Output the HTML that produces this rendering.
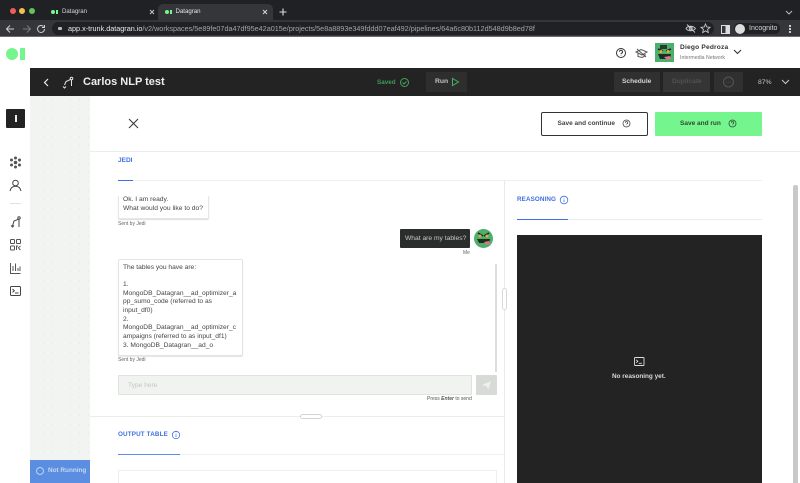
<!DOCTYPE html>
<html><head><meta charset="utf-8"><title>Datagran</title>
<style>
html,body{margin:0;padding:0;width:800px;height:483px;overflow:hidden;background:#fff;font-family:"Liberation Sans",sans-serif}
.a{position:absolute}
.t{position:absolute;white-space:nowrap}
svg{position:absolute;overflow:visible}
</style></head><body>
<!-- Browser chrome -->
<div class="a" style="left:0;top:0;width:800px;height:20px;background:#202124"></div>
<div class="a" style="left:0;top:20px;width:800px;height:17px;background:#35363a"></div>
<div class="a" style="left:0;top:36px;width:800px;height:1px;background:#6a6b6e"></div>
<div class="a" style="left:10px;top:7.500px;width:6px;height:6px;border-radius:50%;background:#ec5f57"></div>
<div class="a" style="left:19px;top:7.500px;width:6px;height:6px;border-radius:50%;background:#f5bd4f"></div>
<div class="a" style="left:29px;top:7.500px;width:6px;height:6px;border-radius:50%;background:#61c454"></div>
<div class="a" style="left:158px;top:4px;width:115px;height:16px;background:#35363a;border-radius:5px 5px 0 0"></div>
<div class="a" style="left:51px;top:10px;width:4px;height:4px;border-radius:50%;background:#7df58f"></div><div class="a" style="left:56px;top:10px;width:2px;height:4px;background:#7df58f"></div>
<div class="t" style="left:62px;top:7px;font-size:6.100px;color:#d5d6d8;line-height:10px">Datagran</div>
<svg style="left:149px;top:9px" width="6" height="6"><path d="M1 1l4 4M5 1L1 5" stroke="#ccc" stroke-width=".9"/></svg>
<div class="a" style="left:165px;top:10px;width:4px;height:4px;border-radius:50%;background:#7df58f"></div><div class="a" style="left:170px;top:10px;width:2px;height:4px;background:#7df58f"></div>
<div class="t" style="left:175.500px;top:7px;font-size:6.100px;color:#e4e5e7;line-height:10px">Datagran</div>
<svg style="left:262px;top:9px" width="6" height="6"><path d="M1 1l4 4M5 1L1 5" stroke="#ddd" stroke-width=".9"/></svg>
<svg style="left:279px;top:8px" width="8" height="8"><path d="M4 .5v7M.5 4h7" stroke="#ddd" stroke-width="1.100"/></svg>
<svg style="left:785px;top:10px" width="8" height="5"><path d="M1 1l3 3 3-3" fill="none" stroke="#bbb" stroke-width="1"/></svg>
<svg style="left:0;top:20px" width="50" height="17" fill="none" stroke="#d0d1d3" stroke-width="1"><path d="M14 9H7M10 5.500L6.500 9l3.500 3.500"/><path d="M30 9h-7M27 5.500L30.500 9 27 12.500" stroke="#77787b"/><path d="M44.500 9a3.500 3.500 0 1 1-1-2.500M44.500 5v2.500H42"/></svg>
<div class="a" style="left:52px;top:22px;width:262px;height:13px;background:#202124;border-radius:7px 0 0 7px"></div>
<div class="a" style="left:300px;top:22px;width:414px;height:13px;background:#202124;border-radius:0 7px 7px 0"></div>
<div class="a" style="left:58px;top:27px;width:4px;height:3px;background:#bbb;border-radius:1px"></div>
<div class="t" style="left:68px;top:24px;font-size:7.240px;line-height:10px;color:#a4a5a8"><span style="color:#e8e9eb">app.x-trunk.datagran.io</span>/v2/workspaces/5e89fe07da47df95e42a015e/projects/5e8a8893e349fddd07eaf492/pipelines/64a6c80b112d548d9b8ed78f</div>
<svg style="left:685px;top:23px" width="12" height="11" fill="none" stroke="#c8c9cb" stroke-width=".9"><path d="M1 5.500C3 2.500 8 2.500 10.500 5.500 8 8.500 3 8.500 1 5.500zM2 1.500l8 8"/><circle cx="5.700" cy="5.500" r="1.500"/></svg>
<svg style="left:700px;top:23px" width="11" height="11" fill="none" stroke="#c8c9cb" stroke-width=".9"><path d="M5.500 1l1.300 3 3.200.3-2.400 2.100.7 3.200-2.800-1.700-2.800 1.700.7-3.200L1 4.300 4.200 4z"/></svg>
<div class="a" style="left:721px;top:25px;width:7px;height:7px;border:1px solid #ddd;box-sizing:content-box;background:linear-gradient(90deg,#35363a 50%,#ddd 50%)"></div>
<div class="a" style="left:734px;top:23px;width:46px;height:11px;background:#202124;border-radius:6px"></div>
<div class="a" style="left:735px;top:24px;width:10px;height:10px;background:#ddd;border-radius:50%"></div>
<div class="t" style="left:749px;top:24px;font-size:7px;line-height:10px;color:#d6d7d9">Incognito</div>
<div class="a" style="left:789px;top:25px;width:1.500px;height:1.500px;background:#ccc;box-shadow:0 3px 0 #ccc,0 6px 0 #ccc"></div>

<!-- Top app bar -->
<div class="a" style="left:6px;top:48px;width:12px;height:12px;border-radius:50%;background:#74f58e"></div>
<div class="a" style="left:20px;top:48px;width:5px;height:12px;background:#74f58e"></div>
<svg style="left:615px;top:46px" width="12" height="14" fill="none" stroke="#333" stroke-width="1"><circle cx="6" cy="7" r="4.500"/><path d="M4.500 5.800a1.500 1.500 0 1 1 2 1.400c-.4.200-.5.500-.5 1M6 9.500v.4"/></svg>
<svg style="left:635px;top:47px" width="13" height="12" fill="none" stroke="#555" stroke-width="1"><path d="M1 5l5-2.500 6 2.500-5 3zM3 6.500v3l4 1 3-1.500V7M2 2l9 8"/></svg>
<svg style="left:655px;top:43px" width="19" height="19"><rect width="19" height="19" fill="#4caf6b"/><rect x="5" y="2" width="7" height="4" fill="#2a3a2c"/><path d="M3 6l5 2M16 6l-5 2" stroke="#222" stroke-width="1.500"/><circle cx="6" cy="8.500" r="1.500" fill="#e0b030"/><circle cx="13" cy="8.500" r="1.500" fill="#e0b030"/><path d="M3 11h13l-1 5H5z" fill="#1f2a20"/><path d="M9 14l6-1 1 3-4 1z" fill="#e0738c"/></svg>
<div class="t" style="left:680px;top:43px;font-size:6.600px;font-weight:bold;color:#333;line-height:10px;letter-spacing:.2px">Diego Pedroza</div>
<div class="t" style="left:680px;top:53.500px;font-size:5.200px;color:#777;line-height:8px">Intermedia Network</div>
<svg style="left:733px;top:49px" width="9" height="6"><path d="M1 1l3.500 3.500L8 1" fill="none" stroke="#333" stroke-width="1.100"/></svg>

<!-- Dark header -->
<div class="a" style="left:30px;top:68px;width:770px;height:28px;background:#222322"></div>
<svg style="left:42px;top:77px" width="8" height="11"><path d="M6 2L2.500 5.500 6 9" fill="none" stroke="#eee" stroke-width="1.200"/></svg>
<svg style="left:62px;top:76px" width="12" height="13" fill="none" stroke="#e4e4e4" stroke-width="1"><circle cx="9.500" cy="2.500" r="1.300"/><path d="M8.500 3.500L4 5.500 2.500 9M9.500 4v6"/><path d="M1 10.500l1.500 1.500 1.500-1.500"/></svg>
<div class="t" style="left:83px;top:74.500px;font-size:11px;font-weight:bold;color:#eee;line-height:15px">Carlos NLP test</div>
<div class="t" style="left:377px;top:78px;font-size:6.300px;font-weight:bold;color:#3f9a56;line-height:10px">Saved</div>
<svg style="left:399px;top:77px" width="11" height="11" fill="none" stroke="#45a35d" stroke-width="1"><circle cx="5.500" cy="5.500" r="4"/><path d="M3.500 5.500l1.500 1.500 2.500-2.500"/></svg>
<div class="a" style="left:426px;top:72px;width:41px;height:20px;background:#2d2e2d;border-radius:1px"></div>
<div class="t" style="left:435px;top:77px;font-size:6.800px;font-weight:bold;color:#c4c4c4;line-height:10px">Run</div>
<svg style="left:451px;top:77px" width="8" height="10"><path d="M1.500 1.500v7l6-3.500z" fill="none" stroke="#4caf66" stroke-width="1"/></svg>
<div class="a" style="left:614px;top:72px;width:46px;height:20px;background:#2f302f;border-radius:1px"></div>
<div class="t" style="left:622px;top:77px;font-size:6.600px;font-weight:bold;color:#d4d4d4;line-height:10px">Schedule</div>
<div class="a" style="left:663px;top:72px;width:47px;height:20px;background:#343534;border-radius:1px"></div>
<div class="t" style="left:672px;top:77px;font-size:6.600px;font-weight:bold;color:#505150;line-height:10px">Duplicate</div>
<div class="a" style="left:714px;top:72px;width:29px;height:20px;background:#2f302f;border-radius:1px"></div>
<svg style="left:722px;top:76px" width="13" height="12" fill="none" stroke="#555" stroke-width="1"><circle cx="6.500" cy="6" r="5"/><path d="M4 6h.6M6.200 6h.6M8.400 6H9"/></svg>
<div class="t" style="left:758px;top:77.500px;font-size:6.800px;color:#c4c4c4;line-height:10px">87%</div>
<svg style="left:781px;top:79px" width="9" height="6"><path d="M1 1l3.500 3.500L8 1" fill="none" stroke="#ccc" stroke-width="1"/></svg>

<!-- Left sidebar -->
<div class="a" style="left:6px;top:109px;width:19px;height:19px;background:#222322;border-radius:1px"></div>
<div class="a" style="left:14.500px;top:115px;width:2px;height:7px;background:#eee"></div>
<svg style="left:9px;top:156px" width="13" height="13" fill="#555"><circle cx="6.500" cy="6.500" r="1.800"/><circle cx="6.500" cy="2" r="1.500"/><circle cx="6.500" cy="11" r="1.500"/><circle cx="2.500" cy="4" r="1.500"/><circle cx="10.500" cy="4" r="1.500"/><circle cx="2.500" cy="9" r="1.500"/><circle cx="10.500" cy="9" r="1.500"/></svg>
<svg style="left:9px;top:179px" width="13" height="13" fill="none" stroke="#444" stroke-width="1"><circle cx="6.500" cy="4" r="2.800"/><path d="M1 12c.6-3 2.500-4.800 5.500-4.800S11.400 9 12 12"/></svg>
<div class="a" style="left:10px;top:203px;width:11px;height:1px;background:#dfe2df"></div>
<svg style="left:10px;top:216px" width="12" height="13" fill="none" stroke="#444" stroke-width="1"><circle cx="9" cy="2" r="1.200"/><path d="M8.500 3.200L4 5 2.500 10M9 3.500v7.500M1 9.500l1.500 1.500L4 9.500"/></svg>
<svg style="left:10px;top:239px" width="11" height="12" fill="none" stroke="#555" stroke-width="1"><rect x=".5" y=".5" width="4" height="4" rx=".6"/><rect x="6.500" y=".5" width="4" height="4" rx=".6"/><rect x=".5" y="7" width="4" height="4" rx=".6"/><path d="M6.500 11V7h1.500M8 9l2.500-2M8.500 9l2 2"/></svg>
<svg style="left:10px;top:262px" width="11" height="12" fill="none" stroke="#555" stroke-width="1"><path d="M.5 1v10.500h10M3 9V4M5.500 9V1.500M8 9V6M10 9V4.500"/></svg>
<svg style="left:10px;top:286px" width="11" height="11" fill="none" stroke="#444" stroke-width="1"><rect x=".5" y=".5" width="10" height="9" rx="1"/><path d="M2.500 3l1.800 1.700-1.800 1.700M5 7h3.500"/></svg>

<!-- Dotted bg -->
<div class="a" style="left:30px;top:96px;width:60px;height:364px;background-color:#f2f4f1;background-image:radial-gradient(#e4e6e3 .6px,transparent .8px);background-size:9px 9px"></div>
<div class="a" style="left:30px;top:460px;width:60px;height:23px;background:#5b8ee0"></div>
<div class="a" style="left:36px;top:467px;width:6px;height:6px;border:1px solid #bcd0f2;border-radius:50%"></div>
<div class="t" style="left:48px;top:466px;font-size:6.400px;color:#c6d8f6;line-height:10px;font-weight:bold">Not Running</div>

<!-- Panel -->
<svg style="left:128px;top:118px" width="11" height="11"><path d="M1 1l9 9M10 1l-9 9" fill="none" stroke="#333" stroke-width="1"/></svg>
<div class="a" style="left:541px;top:112px;width:107px;height:24px;box-sizing:border-box;border:1px solid #333;border-radius:2px;background:#fff"></div>
<div class="t" style="left:557.500px;top:118.500px;font-size:6.500px;font-weight:bold;color:#444;line-height:10px">Save and continue</div>
<svg style="left:622px;top:119px" width="9" height="9" fill="none" stroke="#444" stroke-width=".8"><circle cx="4.500" cy="4.500" r="3.500"/><path d="M3.300 3.700a1.200 1.200 0 1 1 1.500 1.200v.6M4.800 6.500v.3"/></svg>
<div class="a" style="left:655px;top:112px;width:107px;height:24px;background:#74f58e;border-radius:1px"></div>
<div class="t" style="left:680px;top:118.500px;font-size:6.500px;font-weight:bold;color:#2c4a33;line-height:10px">Save and run</div>
<svg style="left:728px;top:119px" width="9" height="9" fill="none" stroke="#2c4a33" stroke-width=".8"><circle cx="4.500" cy="4.500" r="3.500"/><path d="M3.300 3.700a1.200 1.200 0 1 1 1.500 1.200v.6M4.800 6.500v.3"/></svg>
<div class="a" style="left:90px;top:151px;width:710px;height:1px;background:#eceeec"></div>
<div class="t" style="left:118px;top:156px;font-size:6.500px;font-weight:bold;color:#3f6fe0;line-height:10px">JEDI</div>
<div class="a" style="left:118px;top:180px;width:644px;height:1px;background:#eef0ee"></div>
<div class="a" style="left:118px;top:179.500px;width:15px;height:1.200px;background:#3f6fe0"></div>

<!-- Chat -->
<div class="a" style="left:118px;top:196px;width:89px;height:22px;background:#fff;border:1px solid #e6e6e6;border-top:none;box-shadow:0 1px 1px #ddd;border-radius:0 0 2px 2px"></div>
<div class="t" style="left:123px;top:196px;font-size:6.700px;line-height:8.700px;color:#444">Ok. I am ready.<br>What would you like to do?</div>
<div class="t" style="left:118px;top:219.500px;font-size:5px;line-height:8px;color:#666">Sent by Jedi</div>
<div class="a" style="left:400px;top:229px;width:70px;height:19px;background:#2b2c2c;border-radius:1px"></div>
<div class="t" style="left:405px;top:234px;font-size:6.700px;line-height:9px;color:#c8c8c8">What are my tables?</div>
<svg style="left:474px;top:229px" width="19" height="19"><circle cx="9.500" cy="9.500" r="9.500" fill="#4caf6b"/><path d="M4 4l5 3M15 4l-5 3" stroke="#222" stroke-width="1.500"/><circle cx="6" cy="7" r="1.500" fill="#e0b030"/><circle cx="13" cy="7" r="1.500" fill="#e0b030"/><path d="M3 10h13l-1 4H5z" fill="#1f2a20"/><path d="M10 13l5-1 1 3-4 1z" fill="#e0738c"/></svg>
<div class="t" style="left:463px;top:249px;font-size:5px;line-height:8px;color:#666">Me</div>
<div class="a" style="left:118px;top:259px;width:123px;height:95px;background:#fff;border:1px solid #e4e4e4;border-radius:2px;box-shadow:0 1px 1px #e4e4e4"></div>
<div class="t" style="left:123px;top:263.500px;font-size:6.650px;line-height:8.680px;color:#444">The tables you have are:<br><br>1.<br>MongoDB_Datagran__ad_optimizer_a<br>pp_sumo_code (referred to as<br>input_df0)<br>2.<br>MongoDB_Datagran__ad_optimizer_c<br>ampaigns (referred to as input_df1)<br>3. MongoDB_Datagran__ad_o</div>
<div class="t" style="left:118px;top:355.500px;font-size:5px;line-height:8px;color:#666">Sent by Jedi</div>
<div class="a" style="left:495px;top:264px;width:2px;height:108px;background:#dcdcdc"></div>

<!-- Input -->
<div class="a" style="left:118px;top:375px;width:354px;height:20px;box-sizing:border-box;background:#f1f3f0;border:1px solid #e0e2df;border-radius:1px"></div>
<div class="t" style="left:128px;top:381px;font-size:6.600px;line-height:9px;color:#c4c6c3">Type here</div>
<div class="a" style="left:476px;top:375px;width:21px;height:20px;background:#d8dad8;border-radius:1px"></div>
<svg style="left:481px;top:380px" width="11" height="10"><path d="M1 5L10 1 7.500 9 5 6z" fill="#eef0ee"/></svg>
<div class="t" style="left:427px;top:395px;font-size:5px;line-height:8px;color:#555">Press <b><i>Enter</i></b> to send</div>

<!-- Divider -->
<div class="a" style="left:90px;top:416px;width:414px;height:1px;background:#eceeec"></div>
<div class="a" style="left:300px;top:414px;width:22px;height:5px;box-sizing:border-box;background:#fff;border:1px solid #d4d4d4;border-radius:3px"></div>
<div class="t" style="left:118px;top:430px;font-size:6.300px;font-weight:bold;color:#3f6fe0;line-height:10px;letter-spacing:.15px">OUTPUT TABLE</div>
<svg style="left:171px;top:430px" width="10" height="10" fill="none" stroke="#3f6fe0" stroke-width=".8"><circle cx="5" cy="5" r="3.700"/><path d="M5 4.500v2.500M5 2.800v.6"/></svg>
<div class="a" style="left:118px;top:454px;width:386px;height:1px;background:#eef0ee"></div>
<div class="a" style="left:118px;top:453.500px;width:62px;height:1.500px;background:#5f8be8"></div>
<div class="a" style="left:118px;top:470px;width:379px;height:13px;box-sizing:border-box;border:1px solid #eeeeee;border-bottom:none"></div>

<!-- Vertical split -->
<div class="a" style="left:504px;top:181px;width:1px;height:302px;background:#e8eae8"></div>
<div class="a" style="left:502px;top:288px;width:5px;height:22px;box-sizing:border-box;background:#fff;border:1px solid #d8d8d8;border-radius:3px"></div>

<!-- Reasoning -->
<div class="t" style="left:517px;top:195px;font-size:6.300px;font-weight:bold;color:#3f6fe0;line-height:10px;letter-spacing:.1px">REASONING</div>
<svg style="left:558.500px;top:194.500px" width="10" height="10" fill="none" stroke="#3f6fe0" stroke-width=".8"><circle cx="5" cy="5" r="3.800"/><path d="M5 4.500v2.500M5 2.800v.6"/></svg>
<div class="a" style="left:517px;top:219px;width:245px;height:1px;background:#eceeec"></div>
<div class="a" style="left:517px;top:218.500px;width:51px;height:1.500px;background:#3f6fe0"></div>
<div class="a" style="left:517px;top:235px;width:245px;height:248px;background:#222322"></div>
<svg style="left:634px;top:357px" width="11" height="10" fill="none" stroke="#ddd" stroke-width=".9"><rect x=".5" y=".5" width="9.500" height="8" rx=".8"/><path d="M2.300 2.800l1.500 1.500-1.500 1.500M4.800 6.300h3"/></svg>
<div class="t" style="left:612px;top:371.500px;font-size:6.400px;font-weight:bold;color:#d8d8d8;line-height:10px">No reasoning yet.</div>

<!-- Page scrollbar -->
<div class="a" style="left:793px;top:185px;width:5px;height:298px;background:#c9c9c9;border-radius:2px 2px 0 0"></div>
</body></html>
